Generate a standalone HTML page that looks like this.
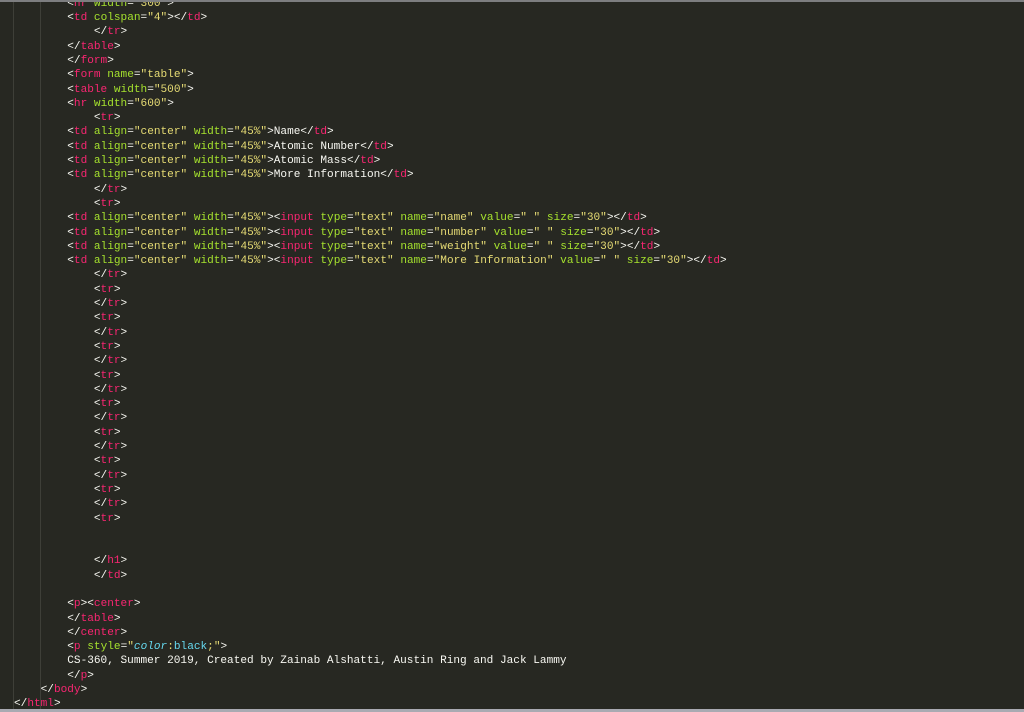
<!DOCTYPE html>
<html><head><meta charset="utf-8"><style>
html,body{margin:0;padding:0;}
body{width:1024px;height:712px;background:#272822;position:relative;overflow:hidden;font-family:"Liberation Mono",monospace;}
pre{position:absolute;left:14px;top:-3.2px;margin:0;font-family:"Liberation Mono",monospace;font-size:11.1px;line-height:14.29px;color:#f8f8f2;}
.t{color:#f92672}.a{color:#a6e22e}.s{color:#e6db74}.c{color:#66d9ef;font-style:italic}
.g{position:absolute;top:0;bottom:0;width:1px;background:#3e3f38}
.top{position:absolute;left:0;top:0;width:1024px;height:2px;background:#7d7e80}
.bot{position:absolute;left:0;bottom:0;width:1024px;height:3px;background:#a9aab2}
</style></head><body>
<div class="g" style="left:13px"></div><div class="g" style="left:40px"></div>
<pre>        &lt;<span class="t">hr</span> <span class="a">width</span>=<span class="s">"300"</span>&gt;
        &lt;<span class="t">td</span> <span class="a">colspan</span>=<span class="s">"4"</span>&gt;&lt;/<span class="t">td</span>&gt;
            &lt;/<span class="t">tr</span>&gt;
        &lt;/<span class="t">table</span>&gt;
        &lt;/<span class="t">form</span>&gt;
        &lt;<span class="t">form</span> <span class="a">name</span>=<span class="s">"table"</span>&gt;
        &lt;<span class="t">table</span> <span class="a">width</span>=<span class="s">"500"</span>&gt;
        &lt;<span class="t">hr</span> <span class="a">width</span>=<span class="s">"600"</span>&gt;
            &lt;<span class="t">tr</span>&gt;
        &lt;<span class="t">td</span> <span class="a">align</span>=<span class="s">"center"</span> <span class="a">width</span>=<span class="s">"45%"</span>&gt;Name&lt;/<span class="t">td</span>&gt;
        &lt;<span class="t">td</span> <span class="a">align</span>=<span class="s">"center"</span> <span class="a">width</span>=<span class="s">"45%"</span>&gt;Atomic Number&lt;/<span class="t">td</span>&gt;
        &lt;<span class="t">td</span> <span class="a">align</span>=<span class="s">"center"</span> <span class="a">width</span>=<span class="s">"45%"</span>&gt;Atomic Mass&lt;/<span class="t">td</span>&gt;
        &lt;<span class="t">td</span> <span class="a">align</span>=<span class="s">"center"</span> <span class="a">width</span>=<span class="s">"45%"</span>&gt;More Information&lt;/<span class="t">td</span>&gt;
            &lt;/<span class="t">tr</span>&gt;
            &lt;<span class="t">tr</span>&gt;
        &lt;<span class="t">td</span> <span class="a">align</span>=<span class="s">"center"</span> <span class="a">width</span>=<span class="s">"45%"</span>&gt;&lt;<span class="t">input</span> <span class="a">type</span>=<span class="s">"text"</span> <span class="a">name</span>=<span class="s">"name"</span> <span class="a">value</span>=<span class="s">" "</span> <span class="a">size</span>=<span class="s">"30"</span>&gt;&lt;/<span class="t">td</span>&gt;
        &lt;<span class="t">td</span> <span class="a">align</span>=<span class="s">"center"</span> <span class="a">width</span>=<span class="s">"45%"</span>&gt;&lt;<span class="t">input</span> <span class="a">type</span>=<span class="s">"text"</span> <span class="a">name</span>=<span class="s">"number"</span> <span class="a">value</span>=<span class="s">" "</span> <span class="a">size</span>=<span class="s">"30"</span>&gt;&lt;/<span class="t">td</span>&gt;
        &lt;<span class="t">td</span> <span class="a">align</span>=<span class="s">"center"</span> <span class="a">width</span>=<span class="s">"45%"</span>&gt;&lt;<span class="t">input</span> <span class="a">type</span>=<span class="s">"text"</span> <span class="a">name</span>=<span class="s">"weight"</span> <span class="a">value</span>=<span class="s">" "</span> <span class="a">size</span>=<span class="s">"30"</span>&gt;&lt;/<span class="t">td</span>&gt;
        &lt;<span class="t">td</span> <span class="a">align</span>=<span class="s">"center"</span> <span class="a">width</span>=<span class="s">"45%"</span>&gt;&lt;<span class="t">input</span> <span class="a">type</span>=<span class="s">"text"</span> <span class="a">name</span>=<span class="s">"More Information"</span> <span class="a">value</span>=<span class="s">" "</span> <span class="a">size</span>=<span class="s">"30"</span>&gt;&lt;/<span class="t">td</span>&gt;
            &lt;/<span class="t">tr</span>&gt;
            &lt;<span class="t">tr</span>&gt;
            &lt;/<span class="t">tr</span>&gt;
            &lt;<span class="t">tr</span>&gt;
            &lt;/<span class="t">tr</span>&gt;
            &lt;<span class="t">tr</span>&gt;
            &lt;/<span class="t">tr</span>&gt;
            &lt;<span class="t">tr</span>&gt;
            &lt;/<span class="t">tr</span>&gt;
            &lt;<span class="t">tr</span>&gt;
            &lt;/<span class="t">tr</span>&gt;
            &lt;<span class="t">tr</span>&gt;
            &lt;/<span class="t">tr</span>&gt;
            &lt;<span class="t">tr</span>&gt;
            &lt;/<span class="t">tr</span>&gt;
            &lt;<span class="t">tr</span>&gt;
            &lt;/<span class="t">tr</span>&gt;
            &lt;<span class="t">tr</span>&gt;


            &lt;/<span class="t">h1</span>&gt;
            &lt;/<span class="t">td</span>&gt;

        &lt;<span class="t">p</span>&gt;&lt;<span class="t">center</span>&gt;
        &lt;/<span class="t">table</span>&gt;
        &lt;/<span class="t">center</span>&gt;
        &lt;<span class="t">p</span> <span class="a">style</span>=<span class="s">"<span class="c">color</span>:<span style="color:#66d9ef">black</span>;"</span>&gt;
        CS-360, Summer 2019, Created by Zainab Alshatti, Austin Ring and Jack Lammy
        &lt;/<span class="t">p</span>&gt;
    &lt;/<span class="t">body</span>&gt;
&lt;/<span class="t">html</span>&gt;</pre>
<div class="top"></div><div class="bot"></div>
</body></html>
